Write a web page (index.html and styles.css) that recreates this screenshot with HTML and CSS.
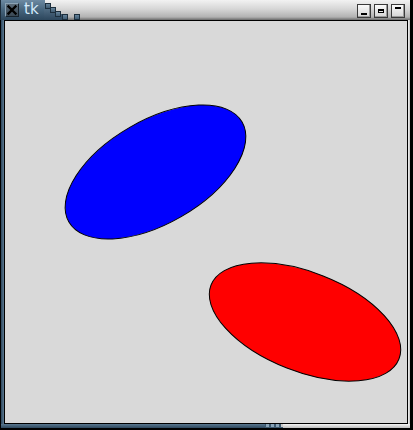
FILE: index.html
```html
<!DOCTYPE html>
<html>
<head>
<meta charset="utf-8">
<link rel="stylesheet" href="styles.css">
</head>
<body>
<div class="window">
  <div class="titlebar">
    <div class="tab">
      <span class="close">
        <svg width="12" height="12" viewBox="0 0 12 12"><path d="M2.5 2.5 L9.5 9.5 M9.5 2.5 L2.5 9.5" stroke="#000" stroke-width="2.4" stroke-linecap="square"/></svg>
      </span>
      <span class="title">tk</span>
    </div>
    <svg class="steps" width="40" height="20" viewBox="0 0 40 20">
      <defs>
        <linearGradient id="tb" x1="0" y1="0" x2="0" y2="1">
          <stop offset="0" stop-color="#6d8aa2"/>
          <stop offset="1" stop-color="#2c465c"/>
        </linearGradient>
        <linearGradient id="bk" x1="0" y1="0" x2="0" y2="1">
          <stop offset="0" stop-color="#6a88a0"/>
          <stop offset="1" stop-color="#3a566c"/>
        </linearGradient>
      </defs>
      <polygon points="0,0 1,0 1,6 6,6 6,10 11,10 11,14 18,14 18,20 0,20" fill="url(#tb)"/>
      <rect x="1.5" y="3.5" width="5" height="5" fill="url(#bk)" stroke="#1c2e3c"/>
      <rect x="6.5" y="7.5" width="5" height="5" fill="url(#bk)" stroke="#1c2e3c"/>
      <rect x="11.5" y="11.5" width="5" height="5" fill="url(#bk)" stroke="#1c2e3c"/>
      <rect x="18.5" y="14.5" width="5" height="5" fill="url(#bk)" stroke="#1c2e3c"/>
      <rect x="30.5" y="14.5" width="5" height="5" fill="url(#bk)" stroke="#1c2e3c"/>
    </svg>
    <div class="bar">
      <span class="btn"><span class="g-min"></span></span>
      <span class="btn"><span class="g-max"></span></span>
      <span class="btn"><span class="g-shade"></span></span>
    </div>
  </div>
  <div class="middle">
    <div class="lborder"></div>
    <div class="client">
      <svg class="canvas" width="402" height="402" viewBox="0 0 402 402">
        <ellipse cx="150.5" cy="151" rx="100" ry="51.5" transform="rotate(-30 150.5 151)" fill="#0000ff" stroke="#000" stroke-width="1"/>
        <ellipse cx="300" cy="301" rx="101" ry="49.5" transform="rotate(21.5 300 301)" fill="#ff0000" stroke="#000" stroke-width="1"/>
      </svg>
    </div>
    <div class="rborder"></div>
  </div>
  <div class="bottom">
    <div class="bblue"></div>
    <svg class="bsteps" width="18" height="4" viewBox="0 0 18 4">
      <rect x="0" y="0" width="18" height="4" fill="#3e5a70"/>
      <rect x="1" y="0" width="3" height="3" fill="#8aa4b8"/>
      <rect x="6" y="0" width="3" height="3" fill="#8aa4b8"/>
      <rect x="11" y="0" width="3" height="3" fill="#8aa4b8"/>
      <rect x="16" y="0" width="2" height="3" fill="#c8c8c8"/>
    </svg>
    <div class="blight"></div>
  </div>
</div>
</body>
</html>
```

FILE: styles.css
```css
html, body {
  margin: 0;
  padding: 0;
  background: #000;
}

.window {
  width: 413px;
  height: 430px;
  box-sizing: border-box;
  padding: 0 3px 2px 0;
  background: #000;
  display: flex;
  flex-direction: column;
  font-family: "DejaVu Sans", "Liberation Sans", sans-serif;
}

.titlebar {
  height: 20px;
  display: flex;
  background: linear-gradient(#f2f2f2, #d6d6d6 45%, #b2b2b2 85%, #6a6a6a);
}

.tab {
  width: 44px;
  box-sizing: border-box;
  border-left: 1px solid #1c2c3a;
  display: flex;
  align-items: flex-start;
  background: linear-gradient(#6d8aa2, #46647c 50%, #2c465c);
}

.close {
  margin: 3px 0 0 4px;
  width: 14px;
  height: 14px;
  box-sizing: border-box;
  border: 1px solid #16222c;
  border-top-color: #8aa2b4;
  border-left-color: #8aa2b4;
  background: linear-gradient(#5a6a78, #3a4854);
  display: flex;
  align-items: center;
  justify-content: center;
}

.close svg {
  display: block;
}

.title {
  margin-left: 5px;
  margin-top: 1px;
  font-size: 15px;
  line-height: 17px;
  color: #d4eafa;
}

.steps {
  display: block;
  width: 40px;
  height: 20px;
  flex: none;
}

.bar {
  flex: 1;
  display: flex;
  justify-content: flex-end;
  align-items: flex-start;
  gap: 3px;
  padding: 4px 5px 0 0;
}

.btn {
  width: 14px;
  height: 14px;
  box-sizing: border-box;
  border: 1px solid #3a3a3a;
  background: linear-gradient(#fafafa, #d4d4d4);
  box-shadow: inset -1px -1px 0 #9a9a9a;
  position: relative;
}

.g-min {
  position: absolute;
  left: 3px;
  top: 8px;
  width: 6px;
  height: 2px;
  background: #000;
}

.g-max {
  position: absolute;
  left: 3px;
  top: 4px;
  width: 6px;
  height: 4px;
  box-sizing: border-box;
  border: 1px solid #000;
  border-top-width: 2px;
  background: #e8e8e8;
}

.g-shade {
  position: absolute;
  left: 3px;
  top: 2px;
  width: 6px;
  height: 2px;
  background: #000;
}

.middle {
  height: 404px;
  display: flex;
}

.lborder {
  width: 3px;
  margin-left: 1px;
  background: linear-gradient(to right, #2e485e, #5a7890);
}

.client {
  width: 404px;
  height: 404px;
  box-sizing: border-box;
  border: 1px solid #000;
  background: #d9d9d9;
}

.canvas {
  display: block;
}

.rborder {
  width: 2px;
  background: linear-gradient(to right, #f4f4f4, #bdbdbd);
}

.bottom {
  height: 4px;
  display: flex;
}

.bblue {
  width: 264px;
  margin-left: 1px;
  background: linear-gradient(#5a7890, #2e485e);
}

.bsteps {
  display: block;
  flex: none;
}

.blight {
  flex: 1;
  background: linear-gradient(#f4f4f4, #bdbdbd);
}
```
